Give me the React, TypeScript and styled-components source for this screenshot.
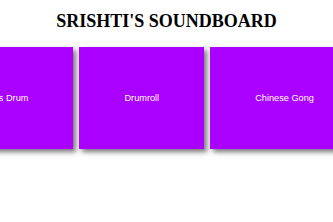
import React from "react";
import styled, { createGlobalStyle } from "styled-components";

const GlobalStyle = createGlobalStyle`
  html, body {
    margin: 0;
    padding: 0;
    background: #fff;
    overflow: hidden;
  }
`;

const Page = styled.div`
  width: 333px;
  height: 222px;
  overflow: hidden;
`;

const Title = styled.h1`
  margin: 0;
  padding-top: 10px;
  text-align: center;
  font-family: "Liberation Serif", "Times New Roman", serif;
  font-weight: bold;
  font-size: 18px;
  line-height: 22px;
  color: #000;
`;

const PadRow = styled.div`
  display: flex;
  gap: 6px;
  margin-top: 15px;
  margin-left: -62px;
`;

const Pad = styled.button`
  flex: 0 0 auto;
  height: 102px;
  border: none;
  padding: 0 45px;
  background: #aa00ff;
  color: #fff;
  font-family: "Liberation Sans", Arial, sans-serif;
  font-size: 9.2px;
  white-space: nowrap;
  box-shadow: 3px 3px 5px #777;
  cursor: pointer;
`;

const sounds = ["Bass Drum", "Drumroll", "Chinese Gong", "Cymbal"];

export default function App() {
  return (
    <Page>
      <GlobalStyle />
      <Title>SRISHTI'S SOUNDBOARD</Title>
      <PadRow>
        {sounds.map((s) => (
          <Pad key={s}>{s}</Pad>
        ))}
      </PadRow>
    </Page>
  );
}
